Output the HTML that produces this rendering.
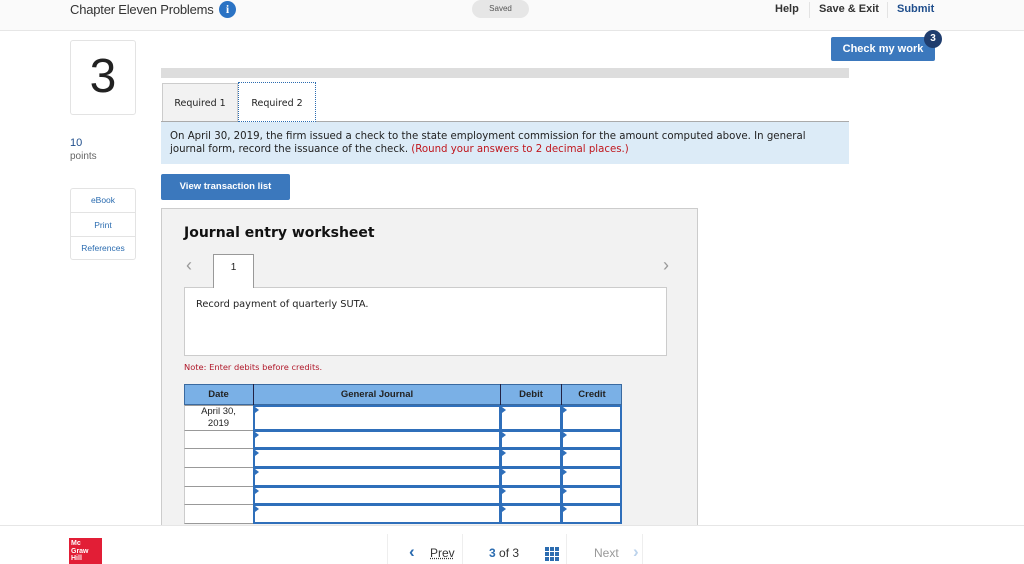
<!DOCTYPE html>
<html><head><meta charset="utf-8"><style>
*{box-sizing:border-box;margin:0;padding:0}
body{width:1024px;height:564px;background:#fff;font-family:"Liberation Sans",sans-serif;position:relative;overflow:hidden;color:#222}
.a{position:absolute}
.v{font-family:"DejaVu Sans","Liberation Sans",sans-serif}
.cell{position:absolute;border:2px solid #2f6fba;background:#fff}
.cell:before{content:"";position:absolute;left:0;top:0;border-left:4px solid #2f6fba;border-top:3px solid transparent;border-bottom:3px solid transparent}
.dc{position:absolute;background:#fff;border:1px solid #999;border-left:1px solid #ccc}
</style></head><body>
<div class="a" style="left:0;top:0;width:1024px;height:31px;background:#fafafa;border-bottom:1px solid #e6e6e6"></div>
<div class="a" style="left:70px;top:2px;font-size:13px;color:#333;letter-spacing:-0.2px">Chapter Eleven Problems</div>
<div class="a" style="left:219px;top:1px;width:17px;height:17px;border-radius:50%;background:#2b73c4;color:#fff;font-size:12px;font-weight:bold;text-align:center;line-height:17px;font-family:'Liberation Serif',serif">i</div>
<div class="a" style="left:472px;top:0;width:57px;height:18px;border-radius:9px;background:#e6e6e6;font-size:8px;color:#555;text-align:center;line-height:17px">Saved</div>
<div class="a" style="left:775px;top:3px;font-size:11px;font-weight:bold;color:#333">Help</div>
<div class="a" style="left:809px;top:2px;width:1px;height:16px;background:#e3e3e3"></div>
<div class="a" style="left:819px;top:3px;font-size:11px;font-weight:bold;color:#333">Save &amp; Exit</div>
<div class="a" style="left:887px;top:2px;width:1px;height:16px;background:#e3e3e3"></div>
<div class="a" style="left:897px;top:3px;font-size:11px;font-weight:bold;color:#1f4e8c">Submit</div>
<div class="a" style="left:831px;top:37px;width:104px;height:24px;background:#3b78bd;border-radius:2px;color:#fff;font-size:11px;font-weight:bold;text-align:center;line-height:24px">Check my work</div>
<div class="a" style="left:924px;top:30px;width:18px;height:18px;border-radius:50%;background:#1f3d6e;color:#fff;font-size:10px;font-weight:bold;text-align:center;line-height:18px">3</div>
<div class="a" style="left:70px;top:40px;width:66px;height:75px;border:1px solid #e3e3e3;border-radius:3px;font-size:48px;text-align:center;line-height:72px;color:#222">3</div>
<div class="a" style="left:70px;top:137px;font-size:11px;color:#1f4e8c">10</div>
<div class="a" style="left:70px;top:151px;font-size:10px;color:#666">points</div>
<div class="a" style="left:70px;top:188px;width:66px;height:72px;border:1px solid #e3e3e3;border-radius:3px"></div>
<div class="a" style="left:71px;top:212px;width:64px;height:1px;background:#e3e3e3"></div>
<div class="a" style="left:71px;top:236px;width:64px;height:1px;background:#e3e3e3"></div>
<div class="a" style="left:70px;top:195px;width:66px;text-align:center;font-size:8.5px;color:#2b6cb0">eBook</div>
<div class="a" style="left:70px;top:220px;width:66px;text-align:center;font-size:8.5px;color:#2b6cb0">Print</div>
<div class="a" style="left:70px;top:243px;width:66px;text-align:center;font-size:8.5px;color:#2b6cb0">References</div>
<div class="a" style="left:161px;top:68px;width:688px;height:10px;background:#ddd"></div>
<div class="a" style="left:161px;top:121px;width:688px;height:1px;background:#aaa"></div>
<div class="a v" style="left:162px;top:83px;width:76px;height:38px;background:#f2f2f2;border:1px solid #ccc;border-bottom:none;font-size:9.5px;text-align:center;line-height:40px">Required 1</div>
<div class="a v" style="left:238px;top:82px;width:78px;height:40px;background:#fff;border:1px dotted #2b6cb0;font-size:9.5px;text-align:center;line-height:42px">Required 2</div>
<div class="a v" style="left:161px;top:122px;width:688px;height:42px;background:#dcebf7;font-size:10.2px;line-height:13px;padding:8px 8px 0 9px;color:#222">On April 30, 2019, the firm issued a check to the state employment commission for the amount computed above. In general journal form, record the issuance of the check. <span style="color:#c0161d">(Round your answers to 2 decimal places.)</span></div>
<div class="a" style="left:161px;top:174px;width:129px;height:26px;background:#3b78bd;border-radius:2px;color:#fff;font-size:9.5px;font-weight:bold;text-align:center;line-height:26px">View transaction list</div>
<div class="a" style="left:161px;top:208px;width:537px;height:330px;background:#f2f2f2;border:1px solid #ccc"></div>
<div class="a v" style="left:184px;top:225px;font-size:14px;font-weight:bold;color:#111">Journal entry worksheet</div>
<div class="a" style="left:186px;top:255px;font-size:18px;color:#999">&lsaquo;</div>
<div class="a" style="left:663px;top:255px;font-size:18px;color:#999">&rsaquo;</div>
<div class="a" style="left:213px;top:254px;width:41px;height:34px;background:#fff;border:1px solid #999;border-bottom:none;z-index:2;font-size:10px;text-align:center;line-height:26px">1</div>
<div class="a" style="left:184px;top:287px;width:483px;height:69px;background:#fff;border:1px solid #ccc"></div>
<div class="a v" style="left:196px;top:299px;font-size:9.8px;color:#222">Record payment of quarterly SUTA.</div>
<div class="a v" style="left:184px;top:362px;font-size:8.3px;color:#b0182a">Note: Enter debits before credits.</div>
<div class="a" style="left:184px;top:384px;width:438px;height:21px;background:#7ab0e6;border:1px solid #3a6aa0"></div>
<div class="a" style="left:253px;top:384px;width:1px;height:21px;background:#224"></div>
<div class="a" style="left:500px;top:384px;width:1px;height:21px;background:#224"></div>
<div class="a" style="left:561px;top:384px;width:1px;height:21px;background:#224"></div>
<div class="a" style="left:184px;top:389px;width:69px;text-align:center;font-size:9.5px;font-weight:bold">Date</div>
<div class="a" style="left:254px;top:389px;width:246px;text-align:center;font-size:9.5px;font-weight:bold">General Journal</div>
<div class="a" style="left:501px;top:389px;width:60px;text-align:center;font-size:9.5px;font-weight:bold">Debit</div>
<div class="a" style="left:562px;top:389px;width:60px;text-align:center;font-size:9.5px;font-weight:bold">Credit</div>
<div class="dc" style="left:184px;top:405px;width:70px;height:26px"></div>
<div class="a" style="left:184px;top:406px;width:69px;text-align:center;font-size:9.5px;line-height:12px">April 30,<br>2019</div>
<div class="cell" style="left:253px;top:405px;width:248px;height:26px"></div>
<div class="cell" style="left:500px;top:405px;width:62px;height:26px"></div>
<div class="cell" style="left:561px;top:405px;width:61px;height:26px"></div>
<div class="dc" style="left:184px;top:430px;width:70px;height:19px"></div>
<div class="cell" style="left:253px;top:430px;width:248px;height:19px"></div>
<div class="cell" style="left:500px;top:430px;width:62px;height:19px"></div>
<div class="cell" style="left:561px;top:430px;width:61px;height:19px"></div>
<div class="dc" style="left:184px;top:448px;width:70px;height:20px"></div>
<div class="cell" style="left:253px;top:448px;width:248px;height:20px"></div>
<div class="cell" style="left:500px;top:448px;width:62px;height:20px"></div>
<div class="cell" style="left:561px;top:448px;width:61px;height:20px"></div>
<div class="dc" style="left:184px;top:467px;width:70px;height:20px"></div>
<div class="cell" style="left:253px;top:467px;width:248px;height:20px"></div>
<div class="cell" style="left:500px;top:467px;width:62px;height:20px"></div>
<div class="cell" style="left:561px;top:467px;width:61px;height:20px"></div>
<div class="dc" style="left:184px;top:486px;width:70px;height:19px"></div>
<div class="cell" style="left:253px;top:486px;width:248px;height:19px"></div>
<div class="cell" style="left:500px;top:486px;width:62px;height:19px"></div>
<div class="cell" style="left:561px;top:486px;width:61px;height:19px"></div>
<div class="dc" style="left:184px;top:504px;width:70px;height:20px"></div>
<div class="cell" style="left:253px;top:504px;width:248px;height:20px"></div>
<div class="cell" style="left:500px;top:504px;width:62px;height:20px"></div>
<div class="cell" style="left:561px;top:504px;width:61px;height:20px"></div>
<div class="a" style="left:0;top:525px;width:1024px;height:39px;background:#fff;border-top:1px solid #e6e6e6"></div>
<div class="a" style="left:69px;top:538px;width:33px;height:26px;background:#e21e36;color:#fff;font-size:7px;font-weight:bold;line-height:7.5px;padding:2px 0 0 2px">Mc<br>Graw<br>Hill</div>
<div class="a" style="left:387px;top:534px;width:1px;height:30px;background:#eee"></div>
<div class="a" style="left:462px;top:534px;width:1px;height:30px;background:#eee"></div>
<div class="a" style="left:566px;top:534px;width:1px;height:30px;background:#eee"></div>
<div class="a" style="left:642px;top:534px;width:1px;height:30px;background:#eee"></div>
<div class="a" style="left:409px;top:542px;font-size:17px;color:#2b6cb0;font-weight:bold">&lsaquo;</div>
<div class="a" style="left:430px;top:546px;font-size:12px;color:#333;text-decoration:underline dotted">Prev</div>
<div class="a" style="left:489px;top:546px;font-size:12px;color:#333"><b style="color:#2b6cb0">3</b> of 3</div>
<div class="a" style="left:545px;top:547px;width:14px;height:14px;background:repeating-linear-gradient(90deg,#2b6cb0 0 4px,transparent 4px 5px),transparent;-webkit-mask:repeating-linear-gradient(0deg,#000 0 4px,transparent 4px 5px)"></div>
<div class="a" style="left:594px;top:546px;font-size:12px;color:#999">Next</div>
<div class="a" style="left:633px;top:542px;font-size:17px;color:#bcd3ec;font-weight:bold">&rsaquo;</div>
</body></html>
